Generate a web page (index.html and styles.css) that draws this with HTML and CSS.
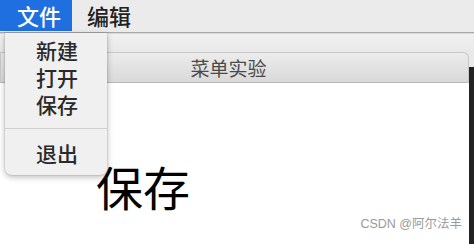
FILE: index.html
```html
<!DOCTYPE html>
<html lang="zh">
<head>
<meta charset="utf-8">
<link rel="stylesheet" href="styles.css">
</head>
<body>
<div class="screen">
  <div class="menubar">
    <div class="menu-title active">文件</div>
    <div class="menu-title">编辑</div>
  </div>
  <div class="desk">
    <div class="window">
      <div class="titlebar">菜单实验</div>
      <div class="content">
        <div class="label">保存</div>
      </div>
    </div>
    <div class="behind"></div>
  </div>
  <div class="dropdown">
    <div class="item">新建</div>
    <div class="item">打开</div>
    <div class="item">保存</div>
    <div class="sep"></div>
    <div class="item">退出</div>
  </div>
  <div class="watermark">CSDN @阿尔法羊</div>
</div>
</body>
</html>
```
FILE: styles.css
```css
html, body {
  margin: 0;
  padding: 0;
}
body {
  width: 474px;
  height: 244px;
  overflow: hidden;
  font-family: "Noto Sans CJK SC", "Noto Sans", sans-serif;
}
.screen {
  position: relative;
  width: 474px;
  height: 244px;
  background: #ececec;
  display: flex;
  flex-direction: column;
}
.menubar {
  height: 32px;
  background: #ebebeb;
  border-bottom: 1px solid #a9a9a9;
  display: flex;
  align-items: stretch;
  flex: none;
}
.menu-title {
  font-size: 22px;
  font-weight: 500;
  line-height: 31px;
  color: #222;
  padding: 0 12px 0 15px;
}
.menu-title.active {
  background: #1f6fe0;
  color: #fff;
  padding: 0 11px 0 17px;
  height: 31px;
}
.desk {
  flex: 1;
  display: flex;
  padding-top: 18px;
  background: linear-gradient(#f1f1f1, #e9e9e9 18px);
  border-top: 1px solid #d8d8d8;
}
.window {
  width: 469px;
  display: flex;
  flex-direction: column;
  flex: none;
}
.titlebar {
  height: 31px;
  box-sizing: border-box;
  border: 1px solid #c8c8c8;
  border-bottom: 1px solid #b8b8b8;
  border-radius: 0 6px 0 0;
  background: linear-gradient(#ececec, #d9d9d9);
  text-align: center;
  font-size: 19px;
  line-height: 29px;
  color: #4a4a4a;
  padding-right: 12px;
}
.content {
  flex: 1;
  background: #fff;
  padding: 79px 0 0 96px;
}
.label {
  font-size: 47px;
  line-height: 1;
  color: #000;
}
.behind {
  flex: 1;
  margin-top: 15px;
  background: #222;
}
.dropdown {
  position: absolute;
  left: 5px;
  top: 33px;
  width: 102px;
  height: 142px;
  box-sizing: border-box;
  background: #f0f0f0;
  border-radius: 0 0 7px 7px;
  box-shadow: 0 2px 6px rgba(0,0,0,0.28), 0 0 0 1px rgba(0,0,0,0.06);
  padding-top: 4px;
}
.item {
  font-size: 21px;
  font-weight: 500;
  line-height: 27px;
  color: #2a2a2a;
  padding-left: 31px;
}
.sep {
  height: 1px;
  background: #d0d0d0;
  margin: 10px 0 11px;
}
.watermark {
  position: absolute;
  right: 12px;
  top: 213px;
  font-family: "Liberation Sans", "Noto Sans CJK SC", sans-serif;
  font-size: 12.5px;
  color: #9a9a9a;
}
```
